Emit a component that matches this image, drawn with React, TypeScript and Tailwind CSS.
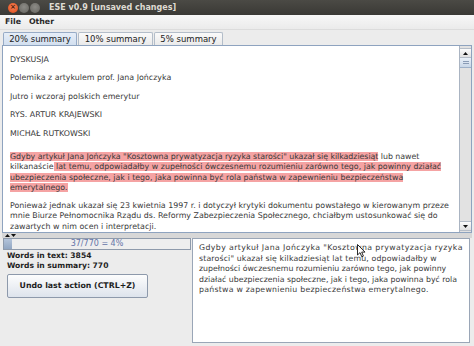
import React from "react";

const HL = "bg-[#f5a3a3]";

function UpTri() {
  return (
    <svg width="5" height="3" viewBox="0 0 5 3">
      <polygon points="0,3 2.5,0 5,3" fill="#111" />
    </svg>
  );
}
function DownTri() {
  return (
    <svg width="5" height="3" viewBox="0 0 5 3">
      <polygon points="0,0 2.5,3 5,0" fill="#111" />
    </svg>
  );
}

export default function App() {
  return (
    <div className="w-[474px] h-[346px] bg-[#ececec] flex flex-col overflow-hidden font-['DejaVu_Sans',sans-serif] text-[#333]">
      {/* title bar */}
      <div className="h-[15px] shrink-0 flex items-center bg-gradient-to-b from-[#4b4a45] to-[#3a3935]">
        <div className="flex items-center gap-[1px] pl-[8px]">
          <span className="w-[10px] h-[10px] rounded-full bg-[radial-gradient(circle_at_50%_40%,#f7845a,#dd4814)] flex items-center justify-center text-[7px] leading-none text-[#4a1a0a] font-bold">×</span>
          <span className="w-[10px] h-[10px] rounded-full bg-[radial-gradient(circle_at_50%_40%,#8d8c87,#64635e)]" />
          <span className="w-[10px] h-[10px] rounded-full bg-[radial-gradient(circle_at_50%_40%,#8d8c87,#64635e)]" />
        </div>
        <span className="ml-[9px] text-[8px] leading-none font-bold text-[#dfdbd2] whitespace-nowrap">
          ESE v0.9 [unsaved changes]
        </span>
      </div>

      {/* menu bar */}
      <div className="h-[15px] shrink-0 flex items-center gap-[8px] pl-[5px] bg-gradient-to-b from-[#f7f7f7] to-[#ebebeb] border-b border-[#dcdcdc] text-[7.8px] font-bold text-[#2a2a2a]">
        <span>File</span>
        <span>Other</span>
      </div>

      {/* tabs */}
      <div className="h-[15px] shrink-0 flex items-end pl-[3px] gap-[1px]">
        <div className="h-[13px] w-[74px] flex items-center justify-center border border-b-0 border-[#97abc6] bg-gradient-to-b from-[#e6eef8] to-[#d2dfef] rounded-t-[2px] text-[8.5px] text-[#222] whitespace-nowrap">
          20% summary
        </div>
        <div className="h-[13px] w-[75px] flex items-center justify-center border border-b-0 border-[#b3bdc9] bg-gradient-to-b from-[#fafafa] to-[#eaeaea] rounded-t-[2px] text-[8.5px] text-[#222] whitespace-nowrap">
          10% summary
        </div>
        <div className="h-[13px] w-[69px] flex items-center justify-center border border-b-0 border-[#b3bdc9] bg-gradient-to-b from-[#fafafa] to-[#eaeaea] rounded-t-[2px] text-[8.5px] text-[#222] whitespace-nowrap">
          5% summary
        </div>
      </div>

      {/* content */}
      <div className="flex-1 flex flex-col px-[2px] pb-[3px] min-h-0">
        {/* top pane */}
        <div className="h-[188px] shrink-0 flex border border-[#8ea3bf] bg-white">
          <div className="flex-1 pl-[7px] pt-[8.75px] text-[7.9px] leading-[10.5px] text-[#3a3a3a] whitespace-nowrap overflow-hidden">
            <div className="mb-[8px]">DYSKUSJA</div>
            <div className="mb-[8px]">Polemika z artykulem prof. Jana Jończyka</div>
            <div className="mb-[8px]">Jutro i wczoraj polskich emerytur</div>
            <div className="mb-[8px]">RYS. ARTUR KRAJEWSKI</div>
            <div>MICHAŁ RUTKOWSKI</div>
            <div className="mt-[12.5px]">
              <div className="tracking-[-0.05px]">
                <span className={HL}>Gdyby artykuł Jana Jończyka "Kosztowna prywatyzacja ryzyka starości" ukazał się kilkadziesiąt</span> lub nawet
              </div>
              <div>
                kilkanaście<span className={HL}> lat temu, odpowiadałby w zupełności ówczesnemu rozumieniu zarówno tego, jak powinny działać</span>
              </div>
              <div>
                <span className={HL}>ubezpieczenia społeczne, jak i tego, jaka powinna być rola państwa w zapewnieniu bezpieczeństwa</span>
              </div>
              <div>
                <span className={HL}>emerytalnego.</span>
              </div>
            </div>
            <div className="mt-[7px]">
              <div>Ponieważ jednak ukazał się 23 kwietnia 1997 r. i dotyczył krytyki dokumentu powstałego w kierowanym przeze</div>
              <div>mnie Biurze Pełnomocnika Rządu ds. Reformy Zabezpieczenia Społecznego, chciałbym ustosunkować się do</div>
              <div>zawartych w nim ocen i interpretacji.</div>
            </div>
          </div>
          {/* scrollbar */}
          <div className="w-[12px] shrink-0 flex flex-col border-l border-[#aab4c2] bg-[#e2e2e2] pt-[2px] pb-[1px]">
            <div className="h-[10px] flex items-center justify-center bg-gradient-to-b from-[#fbfbfb] to-[#e0e0e0] border-y border-[#b5bdc8]">
              <UpTri />
            </div>
            <div className="h-[10px] flex flex-col items-center justify-center gap-[1px] bg-gradient-to-b from-[#e9f0f8] to-[#c9d7e8] border-b border-[#9db0c8]">
              <span className="w-[6px] h-[1px] bg-[#8a9cb6]" />
              <span className="w-[6px] h-[1px] bg-[#8a9cb6]" />
            </div>
            <div className="flex-1" />
            <div className="h-[10px] flex items-center justify-center bg-gradient-to-b from-[#fbfbfb] to-[#e0e0e0] border-y border-[#b5bdc8]">
              <DownTri />
            </div>
          </div>
        </div>

        {/* divider */}
        <div className="h-[5px] shrink-0 flex items-center gap-[1px] pl-[3px] bg-[#e6e6e6] bg-[radial-gradient(#c4c4c4_0.6px,transparent_0.8px)] bg-[length:2px_2px]">
          <UpTri />
          <DownTri />
        </div>

        {/* bottom */}
        <div className="flex-1 flex gap-[1px] min-h-0">
          <div className="w-[189px] shrink-0 flex flex-col pl-[1px]">
            <div className="relative h-[12px] border border-[#8e9aab] bg-[#eeeeee] flex items-center justify-center">
              <div className="absolute left-0 top-0 bottom-0 w-[8px] bg-gradient-to-b from-[#b4c4da] to-[#91a6c2]" />
              <span className="relative text-[8px] leading-none text-[#6474a8]">37/770 = 4%</span>
            </div>
            <div className="pl-[4px] pt-[1px] text-[7.6px] leading-[10px] font-bold text-[#1e1e1e] whitespace-nowrap">
              <div>Words in text: 3854</div>
              <div>Words in summary: 770</div>
            </div>
            <div className="ml-[4px] mt-[3px] w-[141px] h-[24px] flex items-center justify-center rounded-[2px] border border-[#8d99ab] bg-gradient-to-b from-[#fdfdfd] to-[#dde3ec] text-[7.8px] font-bold text-[#1e1e1e] whitespace-nowrap">
              Undo last action (CTRL+Z)
            </div>
          </div>
          <div className="relative flex-1 mr-[2px] border border-[#9aa6b7] bg-white pl-[6px] pt-[4px] text-[7.8px] leading-[10.5px] text-[#3a3a3a] whitespace-nowrap overflow-hidden">
            <div className="tracking-[0.4px]">Gdyby artykuł Jana Jończyka "Kosztowna prywatyzacja ryzyka</div>
            <div className="tracking-[0.15px]">starości" ukazał się kilkadziesiąt lat temu, odpowiadałby w</div>
            <div>zupełności ówczesnemu rozumieniu zarówno tego, jak powinny</div>
            <div>działać ubezpieczenia społeczne, jak i tego, jaka powinna być rola</div>
            <div className="tracking-[0.25px]">państwa w zapewnieniu bezpieczeństwa emerytalnego.</div>
            <svg className="absolute left-[164px] top-[5px]" width="9" height="14" viewBox="0 0 9 14">
              <polygon points="0.5,0.5 0.5,11 3,8.6 4.8,12.8 6.4,12.1 4.7,8.1 8,8.1" fill="#fff" stroke="#111" strokeWidth="0.9" strokeLinejoin="round" />
            </svg>
          </div>
        </div>
      </div>
    </div>
  );
}
